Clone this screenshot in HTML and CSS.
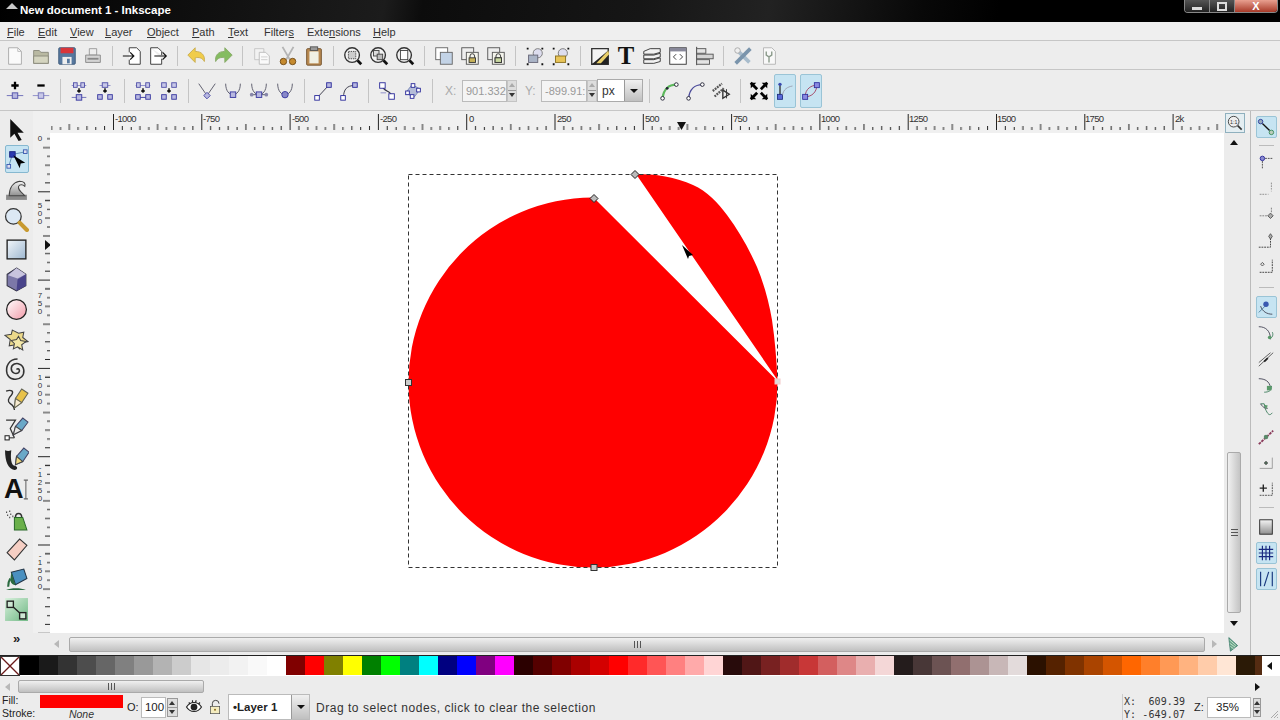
FILE: index.html
```html
<!DOCTYPE html>
<html lang="en">
<head>
    <meta charset="UTF-8">
    <title>New document 1 - Inkscape</title>
    <link rel="stylesheet" href="styles.css">
</head>
<body>
    <!-- icon set -->
    <svg class="defs" width="0" height="0">
        <defs>
            <linearGradient id="blue" x1="0" y1="0" x2="1" y2="1"><stop offset="0" stop-color="#f2f6fa"/><stop offset="1" stop-color="#9db7d0"/></linearGradient>
            <linearGradient id="pink" x1="0" y1="0" x2="1" y2="1"><stop offset="0" stop-color="#fff"/><stop offset="1" stop-color="#f29aa8"/></linearGradient>
            <linearGradient id="grey" x1="0" y1="0" x2="0" y2="1"><stop offset="0" stop-color="#f4f4f4"/><stop offset="1" stop-color="#8f8f8f"/></linearGradient>
            <linearGradient id="green" x1="0" y1="0" x2="1" y2="1"><stop offset="0" stop-color="#d8f0dc"/><stop offset="1" stop-color="#6fb884"/></linearGradient>

            <symbol id="new" viewBox="0 0 24 24"><path d="M5 3h10l4 4v14H5z" fill="#fafafa" stroke="#aaa"/><path d="M15 3v4h4" fill="none" stroke="#bbb"/></symbol>
            <symbol id="open" viewBox="0 0 24 24"><path d="M4 6h6l2 2h8v12H4z" fill="#b9b9a2" stroke="#8a8a7c"/><path d="M4 12h16v8H4z" fill="#d5d5c0" stroke="#8a8a7c"/></symbol>
            <symbol id="save" viewBox="0 0 24 24"><rect x="3" y="3" width="18" height="18" rx="1" fill="#56789f" stroke="#3e5a7a"/><rect x="5" y="3" width="14" height="6" fill="#d9353a"/><rect x="7" y="13" width="10" height="8" fill="#eee"/><rect x="12" y="15" width="3" height="5" fill="#56789f"/></symbol>
            <symbol id="print" viewBox="0 0 24 24"><path d="M8 4h8v7H8z" fill="#eee" stroke="#999"/><path d="M4 11h16v8H4z" fill="#d4d4d4" stroke="#888"/><path d="M6 15h12" stroke="#888" stroke-width="2"/></symbol>
            <symbol id="import" viewBox="0 0 24 24"><path d="M9 8V3h8l4 4v14H9v-5" fill="#fff" stroke="#333"/><path d="M2 12h12M10 8l4 4-4 4" fill="none" stroke="#111" stroke-width="1.300"/></symbol>
            <symbol id="export" viewBox="0 0 24 24"><path d="M4 3h8l4 4v4M16 15v6H4V3" fill="#fff" stroke="#333"/><path d="M8 12h13M17 8l4 4-4 4" fill="none" stroke="#111" stroke-width="1.300"/></symbol>
            <symbol id="undo" viewBox="0 0 24 24"><path d="M10 3L2 11l8 8v-5c4-1 8 0 10 4 1-7-3-11-10-11z" fill="#f0cc4a" stroke="#c8ac50"/></symbol>
            <symbol id="redo" viewBox="0 0 24 24"><path d="M14 3l8 8-8 8v-5c-4-1-8 0-10 4-1-7 3-11 10-11z" fill="#84bc60" stroke="#8aaa6a"/></symbol>
            <symbol id="dup" viewBox="0 0 24 24"><path d="M4 4h10v12H4z" fill="#f2f2f2" stroke="#c4c4c4"/><path d="M9 8h7l4 4v9H9z" fill="#fafafa" stroke="#bbb"/><path d="M11 13h7M11 16h7" stroke="#ccc"/></symbol>
            <symbol id="cut" viewBox="0 0 24 24"><path d="M6 2l8 14M18 2L10 16" stroke="#b4b4b4" stroke-width="2"/><circle cx="7" cy="18" r="3.500" fill="#c58a2e" stroke="#704a18"/><circle cx="17" cy="18" r="3.500" fill="#c58a2e" stroke="#704a18"/></symbol>
            <symbol id="paste" viewBox="0 0 24 24"><rect x="4" y="4" width="16" height="18" rx="1" fill="#b98a52" stroke="#704f28"/><rect x="7" y="7" width="10" height="13" fill="#f0f0e4"/><rect x="8" y="2" width="8" height="4" fill="#999" stroke="#555"/></symbol>
            <symbol id="lens" viewBox="0 0 24 24"><circle cx="11" cy="11" r="8" fill="#f2f2f2" stroke="#333" stroke-width="1.500"/><path d="M17 17l4 4" stroke="#111" stroke-width="3"/></symbol>
            <symbol id="zsel" viewBox="0 0 24 24"><use href="#lens"/><rect x="7" y="7" width="8" height="8" fill="#ccc" stroke="#444" stroke-dasharray="1.500 1"/></symbol>
            <symbol id="zdraw" viewBox="0 0 24 24"><use href="#lens"/><rect x="6" y="6" width="6" height="6" fill="#ddd" stroke="#444"/><rect x="10" y="10" width="6" height="6" fill="#bbb" stroke="#444"/></symbol>
            <symbol id="zpage" viewBox="0 0 24 24"><use href="#lens"/><rect x="7" y="6" width="8" height="10" fill="#fff" stroke="#444"/></symbol>
            <symbol id="group1" viewBox="0 0 24 24"><rect x="3" y="3" width="13" height="13" fill="#fff" stroke="#666"/><rect x="8" y="8" width="13" height="13" fill="#c3d3e6" stroke="#666"/></symbol>
            <symbol id="lock1" viewBox="0 0 24 24"><rect x="3" y="3" width="13" height="13" fill="#eee" stroke="#555"/><rect x="8" y="8" width="13" height="13" fill="#f4f4ec" stroke="#555"/><path d="M12 14v-2a2.500 2.500 0 015 0v2" fill="none" stroke="#333"/><rect x="11" y="14" width="7" height="5" fill="#c8b35a" stroke="#333"/></symbol>
            <symbol id="lock2" viewBox="0 0 24 24"><use href="#lock1"/><rect x="11" y="14" width="7" height="5" fill="#c8d8a0" stroke="#333"/></symbol>
            <symbol id="sel1" viewBox="0 0 24 24"><path d="M3 4h2M19 4h2M3 21h2M19 21h2" stroke="#111" stroke-width="2"/><circle cx="15" cy="9" r="5" fill="#dde" stroke="#777"/><rect x="5" y="11" width="10" height="8" fill="#aab4c6" stroke="#667"/></symbol>
            <symbol id="sel2" viewBox="0 0 24 24"><path d="M3 4h2M19 4h2M3 21h2M19 21h2" stroke="#111" stroke-width="2"/><circle cx="14" cy="9" r="5" fill="#dde" stroke="#777"/><rect x="6" y="12" width="11" height="7" fill="#e8c458" stroke="#8a7020"/></symbol>
            <symbol id="fills" viewBox="0 0 24 24"><path d="M3 4h18v17H3z" fill="#f4f4f4" stroke="#333" stroke-width="1.500"/><path d="M3 21L21 6v15z" fill="#222"/><path d="M8 20L21 6l1 4-9 10z" fill="#e9cf6a"/></symbol>
            <symbol id="textt" viewBox="0 0 24 24"><text x="12" y="21" text-anchor="middle" class="glyph-t">T</text></symbol>
            <symbol id="layers" viewBox="0 0 24 24"><path d="M3 7l7-3h11v4l-7 2H3zM3 11h11l7-2v4l-7 2H3zM3 16h11l7-2v4l-7 2H3z" fill="#f2f2f2" stroke="#333"/></symbol>
            <symbol id="xml" viewBox="0 0 24 24"><rect x="3" y="3" width="18" height="18" fill="#fff" stroke="#333"/><rect x="3" y="3" width="18" height="4" fill="#889"/><path d="M10 10l-3 3 3 3M14 10l3 3-3 3" fill="none" stroke="#333"/></symbol>
            <symbol id="align" viewBox="0 0 24 24"><path d="M4 2v20" stroke="#333"/><rect x="4" y="4" width="10" height="5" fill="#e4e4e4" stroke="#555"/><rect x="4" y="10" width="18" height="5" fill="#d4d4d4" stroke="#555"/><rect x="4" y="16" width="14" height="5" fill="#e4e4e4" stroke="#555"/></symbol>
            <symbol id="tools" viewBox="0 0 24 24"><path d="M5 5l14 14" stroke="#a8bccc" stroke-width="4"/><path d="M20 4L4 20" stroke="#7a94ac" stroke-width="4"/><circle cx="6" cy="6" r="3" fill="#efefef" stroke="#a8a8a8"/></symbol>
            <symbol id="docprops" viewBox="0 0 24 24"><path d="M6 3h9l4 4v14H6z" fill="#f8f8f8" stroke="#b4b4b4"/><path d="M9 7v4l3 2v6M15 7v4l-3 2" fill="none" stroke="#8a9a8a" stroke-width="1.500"/></symbol>

            <!-- node toolbar -->
            <symbol id="nadd" viewBox="0 0 24 24"><path d="M12 2v8M8 6h8" stroke="#000" stroke-width="2.500"/><path d="M3 17h18" stroke="#6a6ab8"/><rect x="9" y="14" width="6" height="6" fill="#b8b8e0" stroke="#5050a8"/></symbol>
            <symbol id="nsub" viewBox="0 0 24 24"><path d="M8 6h8" stroke="#000" stroke-width="2.500"/><path d="M3 17h18" stroke="#8a8ac8"/><rect x="9" y="14" width="6" height="6" fill="#c8c8e8" stroke="#7070b8"/></symbol>
            <symbol id="njoin" viewBox="0 0 24 24"><path d="M4 6h16" stroke="#8a8ac8"/><rect x="6" y="3" width="4" height="5" fill="#c8c8e8" stroke="#5050a8"/><rect x="14" y="3" width="4" height="5" fill="#c8c8e8" stroke="#5050a8"/><path d="M12 9v5M10 12h4" stroke="#000" stroke-width="1.500"/><path d="M4 19h16" stroke="#6a6ab8"/><rect x="9" y="16" width="6" height="6" fill="#b8b8e0" stroke="#3838a0"/></symbol>
            <symbol id="nbreak" viewBox="0 0 24 24"><path d="M6 6h12" stroke="#8a8ac8"/><rect x="9" y="3" width="6" height="5" fill="#c8c8e8" stroke="#5050a8"/><path d="M12 9v5M10 12h4" stroke="#000" stroke-width="1.500"/><rect x="4" y="16" width="5" height="5" fill="#b8b8e0" stroke="#3838a0"/><rect x="15" y="16" width="5" height="5" fill="#b8b8e0" stroke="#3838a0"/></symbol>
            <symbol id="nseg1" viewBox="0 0 24 24"><path d="M4 6h16" stroke="#8a8ac8"/><rect x="5" y="3" width="4" height="5" fill="#c8c8e8" stroke="#5050a8"/><rect x="15" y="3" width="4" height="5" fill="#c8c8e8" stroke="#5050a8"/><path d="M12 9v5M10 12h4" stroke="#000" stroke-width="1.500"/><path d="M4 19h16" stroke="#3838a0"/><rect x="4" y="16" width="5" height="5" fill="#b8b8e0" stroke="#3838a0"/><rect x="15" y="16" width="5" height="5" fill="#b8b8e0" stroke="#3838a0"/></symbol>
            <symbol id="nseg2" viewBox="0 0 24 24"><rect x="4" y="3" width="5" height="5" fill="#c8c8e8" stroke="#5050a8"/><rect x="15" y="3" width="5" height="5" fill="#c8c8e8" stroke="#5050a8"/><path d="M12 9v5M10 12h4" stroke="#000" stroke-width="1.500"/><rect x="4" y="16" width="5" height="5" fill="#b8b8e0" stroke="#3838a0"/><rect x="15" y="16" width="5" height="5" fill="#b8b8e0" stroke="#3838a0"/></symbol>
            <symbol id="ncusp" viewBox="0 0 24 24"><path d="M3 4l9 13M21 4l-9 13" fill="none" stroke="#556"/><rect x="9.500" y="14.500" width="5" height="5" transform="rotate(45 12 17)" fill="#b8b8e0" stroke="#5050a8"/></symbol>
            <symbol id="nsmooth" viewBox="0 0 24 24"><path d="M4 4c0 8 4 12 8 12s8-4 8-12" fill="none" stroke="#556"/><rect x="9" y="13" width="6" height="6" fill="#b8b8e0" stroke="#3838a0"/></symbol>
            <symbol id="nsym" viewBox="0 0 24 24"><path d="M4 4c0 8 4 12 8 12s8-4 8-12" fill="none" stroke="#556"/><path d="M3 16h18" stroke="#556"/><rect x="9" y="13" width="6" height="6" fill="#b8b8e0" stroke="#3838a0"/><circle cx="4" cy="16" r="2" fill="#88a"/><circle cx="20" cy="16" r="2" fill="#88a"/></symbol>
            <symbol id="nauto" viewBox="0 0 24 24"><path d="M4 4c0 8 4 12 8 12s8-4 8-12" fill="none" stroke="#556"/><circle cx="12" cy="16" r="3.500" fill="#8888c8" stroke="#3838a0"/></symbol>
            <symbol id="nline" viewBox="0 0 24 24"><path d="M6 19L18 6" stroke="#334"/><rect x="3" y="17" width="5" height="5" fill="#fff" stroke="#2a2a9a"/><rect x="16" y="3" width="5" height="5" fill="#b8b8e0" stroke="#2a2a9a"/></symbol>
            <symbol id="ncurve" viewBox="0 0 24 24"><path d="M6 19C6 10 10 6 18 6" fill="none" stroke="#334"/><rect x="3" y="17" width="5" height="5" fill="#fff" stroke="#2a2a9a"/><rect x="16" y="3" width="5" height="5" fill="#b8b8e0" stroke="#2a2a9a"/></symbol>
            <symbol id="nobj" viewBox="0 0 24 24"><path d="M7 6c0 7 10 5 10 12" fill="none" stroke="#334" stroke-width="1.500"/><rect x="4" y="3" width="6" height="6" fill="#fff" stroke="#2a2a9a"/><rect x="14" y="15" width="6" height="6" fill="#fff" stroke="#2a2a9a"/><path d="M5 14h6" stroke="#8a8ac8"/></symbol>
            <symbol id="nstroke" viewBox="0 0 24 24"><path d="M4 14l7-9 9 5-7 9z" fill="#b4bcd8" stroke="#7a88b8"/><rect x="10" y="4" width="4" height="4" fill="#fff" stroke="#2a2a9a"/><rect x="4" y="12" width="4" height="4" fill="#fff" stroke="#2a2a9a"/><rect x="16" y="9" width="4" height="4" fill="#fff" stroke="#2a2a9a"/><rect x="9" y="16" width="4" height="4" fill="#fff" stroke="#2a2a9a"/></symbol>
            <symbol id="nlpe" viewBox="0 0 24 24"><path d="M5 20C6 10 12 5 20 5" fill="none" stroke="#5cb85c" stroke-width="2.500"/><circle cx="5" cy="20" r="2" fill="#fff" stroke="#223"/><circle cx="20" cy="5" r="2" fill="#fff" stroke="#223"/><circle cx="10" cy="9" r="1.500" fill="#223"/></symbol>
            <symbol id="nclip" viewBox="0 0 24 24"><path d="M5 20C6 10 12 5 20 5" fill="none" stroke="#4a4a9a" stroke-width="1.500"/><circle cx="5" cy="20" r="2" fill="#fff" stroke="#223"/><circle cx="20" cy="5" r="2" fill="#fff" stroke="#223"/></symbol>
            <symbol id="nmask" viewBox="0 0 24 24"><path d="M3 12l10-8M5 18l10-9" stroke="#555" stroke-width="2.500" stroke-dasharray="2 1"/><path d="M14 11v9l7-4.500z" fill="none" stroke="#333" stroke-width="1.500"/><path d="M18 10v10" stroke="#333"/></symbol>
            <symbol id="nhandle" viewBox="0 0 24 24"><path d="M3 3l7 7M21 3l-7 7M3 21l7-7M21 21l-7-7" stroke="#000" stroke-width="3"/><path d="M3 3h6L3 9zM21 3h-6l6 6zM3 21h6l-6-6zM21 21h-6l6-6z" fill="#000"/></symbol>
            <symbol id="nshow" viewBox="0 0 24 24"><path d="M6 5v15" stroke="#222" stroke-width="1.500"/><circle cx="6" cy="4" r="2" fill="#3a4ab0"/><rect x="3" y="16" width="6" height="6" fill="#5a6ad8" stroke="#1a2a80"/><path d="M9 17C10 10 15 7 21 6" fill="none" stroke="#99a"/></symbol>
            <symbol id="noutline" viewBox="0 0 24 24"><path d="M5 19C5 9 13 5 19 5" fill="none" stroke="#a03050"/><path d="M5 19c8 0 14-6 14-14" fill="none" stroke="#a03050"/><rect x="2" y="16" width="6" height="6" fill="#8a8ae0" stroke="#2a2a9a"/><rect x="16" y="2" width="6" height="6" fill="#8a8ae0" stroke="#2a2a9a"/></symbol>

            <!-- left toolbox -->
            <symbol id="tselect" viewBox="0 0 24 24"><path d="M6 2l13 13h-6l4 7-3 1-4-7-4 4z" fill="#111"/></symbol>
            <symbol id="tnode" viewBox="0 0 24 24"><path d="M7 7l15-3M7 7L3 20" stroke="#5a8ab0" fill="none"/><rect x="4" y="4" width="6" height="6" fill="#2a3ab0" stroke="#1a2480"/><rect x="19" y="2" width="4" height="4" fill="#dde" stroke="#3a5ab0"/><rect x="1" y="18" width="4" height="4" fill="#dde" stroke="#3a5ab0"/><path d="M8 8l13 8-5 1-1 5z" fill="#000"/></symbol>
            <symbol id="ttweak" viewBox="0 0 24 24"><path d="M2 22v-5h20v5z" fill="#8a8a8a"/><path d="M5 18c0-8 4-13 10-14 4 0 6 2 5 5-2-2-5-2-6 0-1 3 2 5 6 9z" fill="url(#grey)" stroke="#444"/></symbol>
            <symbol id="tzoom" viewBox="0 0 24 24"><circle cx="9" cy="9" r="7.500" fill="#dce8f4" stroke="#333" stroke-width="1.200"/><path d="M15 15l7 7" stroke="#c89a30" stroke-width="4" stroke-linecap="round"/></symbol>
            <symbol id="trect" viewBox="0 0 24 24"><rect x="3" y="3" width="18" height="18" fill="url(#blue)" stroke="#222" stroke-width="1.300"/></symbol>
            <symbol id="t3d" viewBox="0 0 24 24"><path d="M12 1l9 6v11l-9 5-9-5V7z" fill="#7c78a8" stroke="#334"/><path d="M12 1l9 6-8 4-9-3z" fill="#c8c4de"/><path d="M13 12l8-5v11l-9 5z" fill="#49448a"/></symbol>
            <symbol id="tcircle" viewBox="0 0 24 24"><circle cx="12" cy="12" r="9.500" fill="url(#pink)" stroke="#222" stroke-width="1.200"/></symbol>
            <symbol id="tstar" viewBox="0 0 24 24"><path d="M8 3l6 3 5-1-1 5 5 4-6 1-2 6-4-4-6 1 1-6-5-4 6-1z" fill="#ecd98a" stroke="#444"/><path d="M14 9l2 4 5 1-4 3 1 5-5-3-4 2 1-5-3-3 5-1z" fill="#f4e8a8" stroke="#444"/></symbol>
            <symbol id="tspiral" viewBox="0 0 24 24"><path d="M12 12c2-2 4 1 2 3-3 2-7 0-7-4 0-4 5-6 8-4 5 2 5 9 2 12-4 4-12 3-14-3C1 9 5 2 13 2" fill="none" stroke="#333" stroke-width="1.500"/></symbol>
            <symbol id="tpencil" viewBox="0 0 24 24"><path d="M2 4c5-2 8 0 5 4-3 3-4 6-1 8 3 2 4 4 4 6" fill="none" stroke="#333" stroke-width="1.300"/><path d="M10 20l1-9 6-9 6 4-6 9z" fill="#e8c24a" stroke="#665"/><path d="M10 20l1-9 6 4z" fill="#f8ecd0" stroke="#665"/></symbol>
            <symbol id="tpen" viewBox="0 0 24 24"><path d="M2 3h9l-5 8 4 9" fill="none" stroke="#333" stroke-width="1.200"/><path d="M2 20h8" stroke="#333"/><rect x="1" y="18" width="4" height="4" fill="#fff" stroke="#222"/><path d="M9 17l2-8 7-8 5 4-6 8z" fill="#6aa8c8" stroke="#446"/><path d="M9 17l2-8 6 4z" fill="#e8e8e8" stroke="#444"/></symbol>
            <symbol id="tcalli" viewBox="0 0 24 24"><path d="M1 3c0 11 3 18 9 19 4 0 3-4 0-4-3-1-4-7-3-15-2 1-4 1-6 0z" fill="#222"/><path d="M11 17l1-8 7-8 5 4-6 9z" fill="#6aa8c8" stroke="#446"/><path d="M11 17l1-8 6 5z" fill="#f0d880" stroke="#444"/></symbol>
            <symbol id="ttext" viewBox="0 0 24 24"><text x="0" y="20" class="glyph-a">A</text><path d="M19 3h4M21 3v18M19 21h4" stroke="#666" fill="none"/></symbol>
            <symbol id="tspray" viewBox="0 0 24 24"><path d="M11 10c0-5 6-5 6 0" fill="none" stroke="#333" stroke-width="1.500"/><path d="M10 10h8l4 12-12 0z" fill="#6ab04a" stroke="#2a6a2a"/><path d="M2 5h1M5 4h1M3 8h1M6 7h1M5 10h1M8 9h1" stroke="#444" stroke-width="1.500"/></symbol>
            <symbol id="teraser" viewBox="0 0 24 24"><path d="M3 15L15 2l7 6-12 14z" fill="#f6cfc4" stroke="#333"/></symbol>
            <symbol id="tfill" viewBox="0 0 24 24"><path d="M7 5l12-3 3 9-11 6z" fill="#4a90c0" stroke="#234"/><path d="M7 5l4 12c-2 1-4-1-5-4z" fill="#2a6a40"/><path d="M6 11c-2 3-2 5-2 8" stroke="#2a6a40" stroke-width="2" fill="none"/><path d="M2 22c5-2 14-2 19 0z" fill="#2a6a40"/></symbol>
            <symbol id="tconn" viewBox="0 0 24 24"><rect x="1" y="1" width="22" height="22" fill="url(#green)"/><path d="M6 7l12 11" stroke="#222" stroke-width="1.300"/><rect x="3" y="4" width="6" height="6" fill="#cfe8d4" stroke="#222" stroke-width="1.300"/><rect x="15" y="15" width="6" height="6" fill="#cfe8d4" stroke="#222" stroke-width="1.300"/></symbol>

            <!-- snap bar -->
            <symbol id="s1" viewBox="0 0 20 20"><path d="M6 6l8 8" stroke="#111" stroke-width="1.500"/><circle cx="4" cy="4" r="2.500" fill="#9ab" stroke="#2a3a9a"/><circle cx="16" cy="16" r="2.500" fill="#bcb" stroke="#3a8a5a"/></symbol>
            <symbol id="s2" viewBox="0 0 20 20"><path d="M6 6h12M6 6v12" stroke="#444" stroke-dasharray="2 1"/><circle cx="6" cy="6" r="2.500" fill="#8a8ad0" stroke="#2a2a9a"/></symbol>
            <symbol id="s3" viewBox="0 0 20 20"><path d="M3 17h7M16 4v7" stroke="#888" stroke-dasharray="2 1"/><path d="M10 17h3M16 11v3" stroke="#aaa" stroke-dasharray="1 1"/></symbol>
            <symbol id="s4" viewBox="0 0 20 20"><path d="M3 12h10M16 3v6" stroke="#777" stroke-dasharray="2 1"/><path d="M15 9l3 3-3 3-3-3z" fill="#aaa" stroke="#555"/></symbol>
            <symbol id="s5" viewBox="0 0 20 20"><path d="M2 18h13v-10" fill="none" stroke="#333" stroke-dasharray="2 1"/><path d="M15 3l2 3-2 3-2-3z" fill="#aaa" stroke="#555"/></symbol>
            <symbol id="s6" viewBox="0 0 20 20"><path d="M3 17h14V3" fill="none" stroke="#333" stroke-dasharray="2 1"/><path d="M6 6l2 2-2 2-2-2z" fill="#ddd" stroke="#555"/></symbol>
            <symbol id="s7" viewBox="0 0 20 20"><path d="M4 9c2 6 7 9 13 9" fill="none" stroke="#445"/><path d="M2 16l9-9" stroke="#4a7a9a"/><circle cx="10" cy="7" r="3" fill="#3a5ab0"/></symbol>
            <symbol id="s8" viewBox="0 0 20 20"><path d="M2 3c8 0 13 5 13 14" fill="none" stroke="#445"/><path d="M15 16c3-2 3-5 2-7" fill="none" stroke="#3a7a5a"/><circle cx="14" cy="15" r="2" fill="#5a9a6a"/></symbol>
            <symbol id="s9" viewBox="0 0 20 20"><path d="M2 18L18 3M2 14L15 3" stroke="#555"/><path d="M8 13l4-4" stroke="#222" stroke-width="2"/></symbol>
            <symbol id="s10" viewBox="0 0 20 20"><path d="M2 3c7 0 12 3 13 10" fill="none" stroke="#445"/><path d="M8 18c5 0 9-2 8-7" fill="none" stroke="#3a7a5a"/><rect x="11" y="11" width="5" height="5" fill="#5a9a6a"/></symbol>
            <symbol id="s11" viewBox="0 0 20 20"><path d="M4 2h4l1 5c3 7 5 9 8 5" fill="none" stroke="#3a7a5a"/><path d="M4 2c3 5 6 5 8 5" fill="none" stroke="#445"/><path d="M8 3l4 1-2 4z" fill="#5a9a6a"/></symbol>
            <symbol id="s12" viewBox="0 0 20 20"><path d="M2 18L18 3" stroke="#8a3a5a" stroke-width="2" stroke-dasharray="3 1"/><circle cx="10" cy="10" r="2.500" fill="#5a8a6a"/></symbol>
            <symbol id="s13" viewBox="0 0 20 20"><path d="M3 16h14V4" fill="none" stroke="#999"/><circle cx="10" cy="10" r="1.500" fill="#5a8a6a" stroke="#444"/></symbol>
            <symbol id="s14" viewBox="0 0 20 20"><path d="M3 9h8M7 5v8" stroke="#222" stroke-width="1.500"/><path d="M3 17h14V3" fill="none" stroke="#444" stroke-dasharray="2 1"/></symbol>
            <symbol id="s15" viewBox="0 0 20 20"><rect x="3" y="2" width="14" height="16" fill="url(#grey)" stroke="#222"/></symbol>
            <symbol id="s16" viewBox="0 0 20 20"><path d="M2 6h16M2 10h16M2 14h16M6 2v16M10 2v16M14 2v16" stroke="#1a2a80" stroke-width="1.300"/></symbol>
            <symbol id="s17" viewBox="0 0 20 20"><path d="M4 2v16M17 2v16M8 18L13 2" stroke="#1a3a80" stroke-width="1.300"/></symbol>
        </defs>
    </svg>

    <div class="window">
        <!-- title bar -->
        <div class="title-bar">
            <span class="app-mark"></span>
            <span class="title-text">New document 1 - Inkscape</span>
            <div class="win-buttons">
                <span class="win-btn"><i class="win-min"></i></span>
                <span class="win-btn"><i class="win-max"></i></span>
                <span class="win-btn win-close">X</span>
            </div>
        </div>

        <!-- menu -->
        <div class="menu-bar">
            <span class="m-file"><u>F</u>ile</span>
            <span class="m-edit"><u>E</u>dit</span>
            <span class="m-view"><u>V</u>iew</span>
            <span class="m-layer"><u>L</u>ayer</span>
            <span class="m-object"><u>O</u>bject</span>
            <span class="m-path"><u>P</u>ath</span>
            <span class="m-text"><u>T</u>ext</span>
            <span class="m-filters">Filter<u>s</u></span>
            <span class="m-ext">Exte<u>n</u>sions</span>
            <span class="m-help"><u>H</u>elp</span>
        </div>

        <!-- commands toolbar -->
        <div class="toolbar tool-main">
            <span class="btn"><svg><use href="#new"/></svg></span>
            <span class="btn"><svg><use href="#open"/></svg></span>
            <span class="btn"><svg><use href="#save"/></svg></span>
            <span class="btn"><svg><use href="#print"/></svg></span>
            <span class="sep"></span>
            <span class="btn"><svg><use href="#import"/></svg></span>
            <span class="btn"><svg><use href="#export"/></svg></span>
            <span class="sep"></span>
            <span class="btn"><svg><use href="#undo"/></svg></span>
            <span class="btn"><svg><use href="#redo"/></svg></span>
            <span class="sep"></span>
            <span class="btn"><svg><use href="#dup"/></svg></span>
            <span class="btn"><svg><use href="#cut"/></svg></span>
            <span class="btn"><svg><use href="#paste"/></svg></span>
            <span class="sep"></span>
            <span class="btn"><svg><use href="#zsel"/></svg></span>
            <span class="btn"><svg><use href="#zdraw"/></svg></span>
            <span class="btn"><svg><use href="#zpage"/></svg></span>
            <span class="sep"></span>
            <span class="btn"><svg><use href="#group1"/></svg></span>
            <span class="btn"><svg><use href="#lock1"/></svg></span>
            <span class="btn"><svg><use href="#lock2"/></svg></span>
            <span class="sep"></span>
            <span class="btn"><svg><use href="#sel1"/></svg></span>
            <span class="btn"><svg><use href="#sel2"/></svg></span>
            <span class="sep"></span>
            <span class="btn"><svg><use href="#fills"/></svg></span>
            <span class="btn"><svg><use href="#textt"/></svg></span>
            <span class="btn"><svg><use href="#layers"/></svg></span>
            <span class="btn"><svg><use href="#xml"/></svg></span>
            <span class="btn"><svg><use href="#align"/></svg></span>
            <span class="sep"></span>
            <span class="btn"><svg><use href="#tools"/></svg></span>
            <span class="btn"><svg><use href="#docprops"/></svg></span>
        </div>

        <!-- node tool controls -->
        <div class="toolbar tool-node">
            <span class="btn"><svg><use href="#nadd"/></svg></span>
            <span class="btn"><svg><use href="#nsub"/></svg></span>
            <span class="sep"></span>
            <span class="btn"><svg><use href="#njoin"/></svg></span>
            <span class="btn"><svg><use href="#nbreak"/></svg></span>
            <span class="sep"></span>
            <span class="btn"><svg><use href="#nseg1"/></svg></span>
            <span class="btn"><svg><use href="#nseg2"/></svg></span>
            <span class="sep"></span>
            <span class="btn"><svg><use href="#ncusp"/></svg></span>
            <span class="btn"><svg><use href="#nsmooth"/></svg></span>
            <span class="btn"><svg><use href="#nsym"/></svg></span>
            <span class="btn"><svg><use href="#nauto"/></svg></span>
            <span class="sep"></span>
            <span class="btn"><svg><use href="#nline"/></svg></span>
            <span class="btn"><svg><use href="#ncurve"/></svg></span>
            <span class="sep"></span>
            <span class="btn"><svg><use href="#nobj"/></svg></span>
            <span class="btn"><svg><use href="#nstroke"/></svg></span>
            <span class="sep"></span>
            <span class="coord-label coord-x">X:</span>
            <span class="coord-input coord-input-x">901.332</span>
            <span class="spin spin-off"><i></i><i></i></span>
            <span class="coord-label coord-y">Y:</span>
            <span class="coord-input coord-input-y">-899.91:</span>
            <span class="spin spin-off"><i></i><i></i></span>
            <span class="unit-combo"><span>px</span><b></b></span>
            <span class="sep sep-unit"></span>
            <span class="btn"><svg><use href="#nlpe"/></svg></span>
            <span class="btn"><svg><use href="#nclip"/></svg></span>
            <span class="btn"><svg><use href="#nmask"/></svg></span>
            <span class="sep"></span>
            <span class="btn"><svg><use href="#nhandle"/></svg></span>
            <span class="btn btn-on"><svg><use href="#nshow"/></svg></span>
            <span class="btn btn-on"><svg><use href="#noutline"/></svg></span>
        </div>

        <!-- main area -->
        <div class="workspace">
            <div class="toolbox">
                <span class="tool"><svg><use href="#tselect"/></svg></span>
                <span class="tool tool-on"><svg><use href="#tnode"/></svg></span>
                <span class="tool"><svg><use href="#ttweak"/></svg></span>
                <span class="tool"><svg><use href="#tzoom"/></svg></span>
                <span class="tool"><svg><use href="#trect"/></svg></span>
                <span class="tool"><svg><use href="#t3d"/></svg></span>
                <span class="tool"><svg><use href="#tcircle"/></svg></span>
                <span class="tool"><svg><use href="#tstar"/></svg></span>
                <span class="tool"><svg><use href="#tspiral"/></svg></span>
                <span class="tool"><svg><use href="#tpencil"/></svg></span>
                <span class="tool"><svg><use href="#tpen"/></svg></span>
                <span class="tool"><svg><use href="#tcalli"/></svg></span>
                <span class="tool"><svg><use href="#ttext"/></svg></span>
                <span class="tool"><svg><use href="#tspray"/></svg></span>
                <span class="tool"><svg><use href="#teraser"/></svg></span>
                <span class="tool"><svg><use href="#tfill"/></svg></span>
                <span class="tool"><svg><use href="#tconn"/></svg></span>
                <span class="tool-more">»</span>
            </div>

            <div class="center">
                <div class="top-row">
                    <svg class="h-ruler" width="1191" height="22" viewBox="33 111 1191 22">
                        <defs>
                            <pattern id="hticks" patternUnits="userSpaceOnUse" x="113" y="111" width="88.3" height="22">
                                <path d="M.5 3v16M9.300 15v4M18.200 16v3M26.900 15v4M35.800 16v3M44.600 13v6M53.400 16v3M62.300 15v4M71.100 16v3M79.900 15v4" stroke="#222" fill="none"/>
                            </pattern>
                        </defs>
                        <rect x="51" y="111" width="1173" height="22" fill="url(#hticks)"/>
                        <g class="ruler-label">
                            <text x="115" y="122">-1000</text><text x="203" y="122">-750</text><text x="292" y="122">-500</text><text x="380" y="122">-250</text>
                            <text x="469" y="122">0</text><text x="557" y="122">250</text><text x="645" y="122">500</text><text x="733" y="122">750</text>
                            <text x="821" y="122">1000</text><text x="909" y="122">1250</text><text x="997" y="122">1500</text><text x="1085" y="122">1750</text><text x="1175" y="122">2k</text>
                        </g>
                        <path d="M677 122h9l-4.500 8z" fill="#111"/>
                    </svg>
                    <span class="zoom-one"><svg viewBox="0 0 24 24"><circle cx="10" cy="10" r="8" fill="#eee" stroke="#333" stroke-width="1.300"/><path d="M16 16l6 6" stroke="#333" stroke-width="2.500"/><text x="10" y="13" text-anchor="middle" class="glyph-one">1:1</text></svg></span>
                </div>

                <div class="mid-row">
                    <svg class="v-ruler" width="17" height="500" viewBox="33 133 17 500">
                        <defs>
                            <pattern id="vticks" patternUnits="userSpaceOnUse" x="33" y="103" width="17" height="88.3">
                                <path d="M5 .5h12M12 9.300h5M14 18.200h3M12 26.900h5M14 35.800h3M10 44.600h7M14 53.400h3M12 62.300h5M14 71.100h3M12 79.900h5" stroke="#222" fill="none"/>
                            </pattern>
                        </defs>
                        <rect x="33" y="133" width="17" height="500" fill="url(#vticks)"/>
                        <g class="ruler-label v-label" text-anchor="middle">
                            <text x="40" y="141">0</text>
                            <text y="208"><tspan x="40">5</tspan><tspan x="40" dy="8">0</tspan><tspan x="40" dy="8">0</tspan></text>
                            <text y="298"><tspan x="40">7</tspan><tspan x="40" dy="8">5</tspan><tspan x="40" dy="8">0</tspan></text>
                            <text y="380"><tspan x="40">1</tspan><tspan x="40" dy="8">0</tspan><tspan x="40" dy="8">0</tspan><tspan x="40" dy="8">0</tspan></text>
                            <text y="470"><tspan x="40">-</tspan><tspan x="40" dy="7">1</tspan><tspan x="40" dy="8">2</tspan><tspan x="40" dy="8">5</tspan><tspan x="40" dy="8">0</tspan></text>
                            <text y="558"><tspan x="40">-</tspan><tspan x="40" dy="7">1</tspan><tspan x="40" dy="8">5</tspan><tspan x="40" dy="8">0</tspan><tspan x="40" dy="8">0</tspan></text>
                        </g>
                        <path d="M45 240l6 5-6 5z" fill="#111"/>
                    </svg>

                    <div class="canvas">
                        <svg class="drawing" viewBox="50 133 1174 500">
                            <path d="M594 198L777.500 381A184.500 185 0 1 1 592 197.500Z" fill="#ff0000"/>
                            <path d="M636 174C655 174 676 177 693 185C707 191 718 203 727 215C739 231 749 249 757 267C764 284 769 302 772 320C775 340 776.500 360 777.500 380Z" fill="#ff0000"/>
                            <rect x="408.500" y="174.500" width="369" height="393" fill="none" stroke="#333" stroke-dasharray="4 3"/>
                            <path d="M635 170.500l4 4-4 4-4-4z" fill="#bbb" stroke="#222"/>
                            <path d="M594 194.500l4 4-4 4-4-4z" fill="#bbb" stroke="#222"/>
                            <rect x="405.500" y="379.500" width="6" height="6" fill="#ccc" stroke="#333"/>
                            <rect x="591" y="564.500" width="6" height="6" fill="#ccc" stroke="#333"/>
                            <rect x="775" y="379" width="5" height="5" fill="#ddd" stroke="#f2c8c8"/>
                            <path d="M682 245l11 10-4 1-1 3z" fill="#000"/>
                        </svg>
                    </div>

                    <div class="v-scroll">
                        <span class="arrow-up"></span>
                        <span class="v-track"><span class="v-thumb"><i></i></span></span>
                        <span class="arrow-down"></span>
                    </div>
                </div>

                <div class="bottom-row">
                    <span class="arrow-left"></span>
                    <span class="h-thumb"><i></i></span>
                    <span class="arrow-right"></span>
                    <svg class="cms" viewBox="0 0 20 20"><path d="M6 2l11 10-9 7z" fill="#6aa58a" stroke="#3a7a6a"/><path d="M7 5l8 7M7 9l7 5M8 13l4 3" stroke="#d8ecd8"/></svg>
                </div>
            </div>

            <div class="snap-bar">
                <span class="snap snap-on"><svg><use href="#s1"/></svg></span>
                <span class="snap-sep snap-sep-a"></span>
                <span class="snap"><svg><use href="#s2"/></svg></span>
                <span class="snap"><svg><use href="#s3"/></svg></span>
                <span class="snap"><svg><use href="#s4"/></svg></span>
                <span class="snap"><svg><use href="#s5"/></svg></span>
                <span class="snap"><svg><use href="#s6"/></svg></span>
                <span class="snap-sep snap-sep-b"></span>
                <span class="snap snap-on"><svg><use href="#s7"/></svg></span>
                <span class="snap"><svg><use href="#s8"/></svg></span>
                <span class="snap"><svg><use href="#s9"/></svg></span>
                <span class="snap"><svg><use href="#s10"/></svg></span>
                <span class="snap"><svg><use href="#s11"/></svg></span>
                <span class="snap"><svg><use href="#s12"/></svg></span>
                <span class="snap"><svg><use href="#s13"/></svg></span>
                <span class="snap"><svg><use href="#s14"/></svg></span>
                <span class="snap-sep snap-sep-c"></span>
                <span class="snap"><svg><use href="#s15"/></svg></span>
                <span class="snap snap-on"><svg><use href="#s16"/></svg></span>
                <span class="snap snap-on"><svg><use href="#s17"/></svg></span>
            </div>
        </div>

        <!-- colour palette -->
        <div class="palette">
            <span class="no-paint"><svg viewBox="0 0 20 20" preserveAspectRatio="none"><path d="M0 0l20 20M20 0L0 20" stroke="#6b1a1a" stroke-width="1.500"/></svg></span>
            <span class="sw sw-000000"></span><span class="sw sw-1a1a1a"></span><span class="sw sw-333333"></span><span class="sw sw-4d4d4d"></span><span class="sw sw-666666"></span><span class="sw sw-808080"></span><span class="sw sw-999999"></span><span class="sw sw-b3b3b3"></span><span class="sw sw-cccccc"></span><span class="sw sw-e6e6e6"></span><span class="sw sw-ececec"></span><span class="sw sw-f2f2f2"></span><span class="sw sw-f9f9f9"></span><span class="sw sw-ffffff"></span>
            <span class="sw sw-800000"></span><span class="sw sw-ff0000"></span><span class="sw sw-808000"></span><span class="sw sw-ffff00"></span><span class="sw sw-008000"></span><span class="sw sw-00ff00"></span><span class="sw sw-008080"></span><span class="sw sw-00ffff"></span><span class="sw sw-000080"></span><span class="sw sw-0000ff"></span><span class="sw sw-800080"></span><span class="sw sw-ff00ff"></span>
            <span class="sw sw-2b0000"></span><span class="sw sw-550000"></span><span class="sw sw-800000"></span><span class="sw sw-aa0000"></span><span class="sw sw-d40000"></span><span class="sw sw-ff0000"></span><span class="sw sw-ff2a2a"></span><span class="sw sw-ff5555"></span><span class="sw sw-ff8080"></span><span class="sw sw-ffaaaa"></span><span class="sw sw-ffd5d5"></span>
            <span class="sw sw-280b0b"></span><span class="sw sw-501616"></span><span class="sw sw-782121"></span><span class="sw sw-a02c2c"></span><span class="sw sw-c83737"></span><span class="sw sw-d35f5f"></span><span class="sw sw-de8787"></span><span class="sw sw-e9afaf"></span><span class="sw sw-f4d7d7"></span>
            <span class="sw sw-241c1c"></span><span class="sw sw-483737"></span><span class="sw sw-6c5353"></span><span class="sw sw-916f6f"></span><span class="sw sw-ac9393"></span><span class="sw sw-c8b7b7"></span><span class="sw sw-e3dbdb"></span>
            <span class="sw sw-2b1100"></span><span class="sw sw-552200"></span><span class="sw sw-803300"></span><span class="sw sw-aa4400"></span><span class="sw sw-d45500"></span><span class="sw sw-ff6600"></span><span class="sw sw-ff7f2a"></span><span class="sw sw-ff9955"></span><span class="sw sw-ffb380"></span><span class="sw sw-ffccaa"></span><span class="sw sw-ffe6d5"></span>
            <span class="sw sw-2b1a06"></span><span class="sw sw-sliver sw-552c12"></span>
            <span class="palette-arrow"></span>
        </div>

        <div class="palette-scroll">
            <span class="arrow-left arrow-faint"></span>
            <span class="p-thumb"><i></i></span>
            <span class="arrow-right arrow-dark"></span>
        </div>

        <!-- status bar -->
        <div class="status-bar">
            <div class="fill-labels">
                <span>Fill:</span>
                <span>Stroke:</span>
            </div>
            <div class="fill-values">
                <span class="fill-swatch"></span>
                <span class="stroke-none">None</span>
            </div>
            <span class="opacity-label">O:</span>
            <span class="opacity-input">100</span>
            <span class="spin"><i></i><i></i></span>
            <svg class="eye" viewBox="0 0 24 24"><path d="M2 12c5-8 15-8 20 0-5 8-15 8-20 0z" fill="#fff" stroke="#222" stroke-width="1.500"/><circle cx="12" cy="12" r="4.500" fill="#222"/><path d="M5 6l2 2M10 3v3M15 3l-1 3M20 6l-2 2" stroke="#222" stroke-width="1.500"/></svg>
            <svg class="padlock" viewBox="0 0 24 24"><path d="M8 11V7a5 5 0 0110 0" fill="none" stroke="#444" stroke-width="1.500"/><rect x="5" y="11" width="14" height="11" fill="#f4ecc0" stroke="#444"/><circle cx="12" cy="16" r="1.500" fill="#8a6a1a"/></svg>
            <span class="layer-combo"><span class="layer-name">•Layer 1</span><b></b></span>
            <span class="status-text">Drag to select nodes, click to clear the selection</span>
            <div class="coords">
                <span>X:&nbsp;&nbsp;609.39</span>
                <span>Y:&nbsp;-649.07</span>
            </div>
            <span class="zoom-label">Z:</span>
            <span class="zoom-input">35%</span>
            <span class="spin spin-zoom"><i></i><i></i></span>
            <svg class="grip" viewBox="0 0 10 10"><path d="M9 2L2 9M9 5L5 9M9 8L8 9" stroke="#aaa"/></svg>
        </div>
    </div>
</body>
</html>
```

FILE: styles.css
```css
/* page base */
* {
    box-sizing: border-box;
}
html, body {
    margin: 0;
    height: 100%;
    overflow: hidden;
}
body {
    font-family: "Liberation Sans", Arial, sans-serif;
    font-size: 12px;
    color: #222;
    background-color: #ececec;
}
.defs {
    position: absolute;
}
.window {
    width: 1280px;
    height: 720px;
    display: flex;
    flex-direction: column;
}
.glyph-t { font-family: "Liberation Serif", serif; font-weight: bold; font-size: 27px; fill: #111; }
.glyph-a { font-family: "Liberation Sans", sans-serif; font-weight: bold; font-size: 26px; fill: #111; }
.glyph-one { font-family: "Liberation Sans", sans-serif; font-size: 8px; fill: #333; }

/* title bar */
.title-bar {
    height: 22px;
    display: flex;
    align-items: center;
    padding-left: 20px;
    padding-bottom: 2px;
    background: linear-gradient(100deg, #000 0, #0c0c0c 12%, #1c1c1c 30%, #0c0c0c 33%, #161616 50%, #222 60%, #080808 72%, #000 78%);
    color: #fff;
    position: relative;
}
.app-mark {
    position: absolute;
    left: 6px;
    top: 3px;
    width: 0;
    height: 0;
    border-left: 6px solid transparent;
    border-right: 6px solid transparent;
    border-bottom: 6px solid #c8c8c8;
}
.title-text {
    font-size: 11.5px;
    font-weight: bold;
}
.win-buttons {
    margin-left: auto;
    margin-right: 2px;
    display: flex;
    height: 13px;
    align-self: flex-start;
    border: 1px solid #888;
    border-top: none;
    border-radius: 0 0 4px 4px;
    overflow: hidden;
}
.win-btn {
    width: 25px;
    display: flex;
    align-items: center;
    justify-content: center;
    background: linear-gradient(#555, #222);
    border-right: 1px solid #888;
}
.win-close {
    width: 42px;
    border-right: none;
    background: linear-gradient(#e8a090, #a83a28);
    color: #fff;
    font-weight: bold;
    font-size: 11px;
    line-height: 10px;
}
.win-min {
    width: 10px;
    height: 3px;
    margin-top: 5px;
    background-color: #ddd;
}
.win-max {
    width: 10px;
    height: 9px;
    border: 2px solid #ddd;
}

/* menu */
.menu-bar {
    height: 19px;
    display: flex;
    align-items: center;
    padding-top: 1px;
    font-size: 11px;
    color: #333;
    border-bottom: 1px solid #c6c6c6;
    background-color: #efefef;
}
.menu-bar span {
    flex: none;
}
.menu-bar .m-file { width: 31px; margin-left: 7px; }
.menu-bar .m-edit { width: 32px; }
.menu-bar .m-view { width: 35px; }
.menu-bar .m-layer { width: 42px; }
.menu-bar .m-object { width: 45px; }
.menu-bar .m-path { width: 36px; }
.menu-bar .m-text { width: 36px; }
.menu-bar .m-filters { width: 43px; }
.menu-bar .m-ext { width: 66px; }

/* toolbars */
.toolbar {
    display: flex;
    align-items: center;
    padding-left: 2px;
    padding-top: 1px;
    background-color: #ededed;
    border-bottom: 1px solid #c6c6c6;
}
.tool-main {
    height: 29px;
}
.tool-node {
    height: 41px;
}
.btn {
    flex: none;
    width: 26px;
    height: 26px;
    display: flex;
    align-items: center;
    justify-content: center;
}
.btn svg {
    width: 22px;
    height: 22px;
}
.btn-on {
    height: 34px;
    width: 22px;
    margin: 0 2px;
    background-color: #c6e4f2;
    border: 1px solid #9ac4d6;
    border-radius: 2px;
}
.sep {
    flex: none;
    width: 13px;
    height: 20px;
    background: linear-gradient(#c4c4c4, #c4c4c4) center / 1px 100% no-repeat;
}
.tool-node .sep {
    width: 12px;
    height: 24px;
}
.tool-node .sep-unit {
    width: 13px;
}

/* node coordinate fields */
.coord-label {
    flex: none;
    color: #aaa;
    font-size: 12px;
}
.coord-x {
    width: 17px;
    margin-left: 7px;
}
.coord-y {
    width: 24px;
    padding-left: 8px;
}
.coord-input {
    flex: none;
    height: 22px;
    line-height: 20px;
    padding-left: 3px;
    font-size: 11px;
    color: #999;
    background-color: #f4f4f4;
    border: 1px solid #bbb;
    white-space: nowrap;
}
.coord-input-x {
    width: 45px;
}
.coord-input-y {
    width: 46px;
}
.spin {
    flex: none;
    width: 10px;
    height: 22px;
    display: flex;
    flex-direction: column;
    border: 1px solid #999;
    background-color: #ddd;
}
.spin i {
    flex: 1;
    position: relative;
}
.spin i:first-child {
    border-bottom: 1px solid #999;
}
.spin i::after {
    content: "";
    position: absolute;
    left: 1px;
    top: 2px;
    border-left: 3px solid transparent;
    border-right: 3px solid transparent;
    border-bottom: 4px solid #333;
}
.spin i:last-child::after {
    border-bottom: none;
    border-top: 4px solid #333;
}
.spin-off {
    border-color: #c4c4c4;
}
.spin-off i::after {
    border-bottom-color: #aaa;
    border-top-color: #aaa;
}
.unit-combo {
    flex: none;
    width: 46px;
    height: 23px;
    display: flex;
    align-items: center;
    justify-content: space-between;
    padding-left: 4px;
    background-color: #fff;
    border: 1px solid #aaa;
    font-size: 12px;
    color: #333;
}
.unit-combo b,
.layer-combo b {
    width: 18px;
    height: 100%;
    display: flex;
    align-items: center;
    justify-content: center;
    background: linear-gradient(#f0f0f0, #c0c0c0);
    border-left: 1px solid #999;
}
.unit-combo b::after,
.layer-combo b::after {
    content: "";
    border-left: 4px solid transparent;
    border-right: 4px solid transparent;
    border-top: 4px solid #111;
}

/* workspace */
.workspace {
    height: 544px;
    display: flex;
}
.toolbox {
    flex: none;
    width: 33px;
    padding-top: 3px;
    display: flex;
    flex-direction: column;
    align-items: center;
    background-color: #ececec;
}
.tool {
    flex: none;
    width: 24px;
    height: 30px;
    display: flex;
    align-items: center;
    justify-content: center;
}
.tool svg {
    flex: none;
    width: 25px;
    height: 25px;
}
.tool-on {
    height: 28px;
    margin-top: 1px;
    margin-bottom: 1px;
    background-color: #c6e4f2;
    border: 1px solid #86b8d0;
    border-radius: 2px;
}
.tool-on svg {
    width: 22px;
    height: 22px;
}
.tool-more {
    margin-top: 7px;
    font-size: 13px;
    font-weight: bold;
    color: #222;
    line-height: 16px;
}

.center {
    flex: none;
    width: 1217px;
    display: flex;
    flex-direction: column;
}
.top-row {
    height: 22px;
    display: flex;
    background-color: #f0f0f0;
}
.h-ruler,
.v-ruler {
    flex: none;
    display: block;
    background-color: #f0f0f0;
}
.ruler-label {
    font-family: "Liberation Sans", sans-serif;
    font-size: 9.5px;
    letter-spacing: -.7px;
    fill: #333;
}
.v-label {
    font-size: 8px;
    letter-spacing: 0;
}
.zoom-one {
    flex: none;
    width: 20px;
    height: 20px;
    margin: 2px 0 0 1px;
    padding: 1px;
    background-color: #e4eef2;
    border: 1px solid #8fb0be;
}
.zoom-one svg {
    display: block;
    width: 100%;
    height: 100%;
}
.mid-row {
    height: 500px;
    display: flex;
}
.canvas {
    flex: none;
    width: 1174px;
    height: 500px;
    position: relative;
    background-color: #fff;
}
.drawing {
    position: absolute;
    left: 0;
    top: 0;
    width: 100%;
    height: 100%;
}

/* scrollbars */
.v-scroll {
    flex: none;
    width: 26px;
    display: flex;
    flex-direction: column;
    align-items: center;
    padding-right: 6px;
    background-color: #ececec;
}
.arrow-up {
    flex: none;
    margin-top: 7px;
    border-left: 4px solid transparent;
    border-right: 4px solid transparent;
    border-bottom: 5px solid #111;
}
.arrow-down {
    flex: none;
    margin: 8px 0 7px;
    border-left: 4px solid transparent;
    border-right: 4px solid transparent;
    border-top: 5px solid #111;
}
.v-track {
    flex: 1;
    width: 14px;
    display: flex;
    flex-direction: column;
    justify-content: flex-end;
}
.v-thumb {
    height: 161px;
    display: flex;
    align-items: center;
    justify-content: center;
    background: linear-gradient(90deg, #f0f0f0, #c4c4c4);
    border: 1px solid #aaa;
    border-radius: 2px;
}
.v-thumb i {
    width: 7px;
    height: 7px;
    border-top: 1px solid #555;
    border-bottom: 1px solid #555;
    background: linear-gradient(#555, #555) center / 100% 1px no-repeat;
}
.bottom-row {
    height: 22px;
    display: flex;
    align-items: center;
    background-color: #ececec;
}
.arrow-left {
    flex: none;
    margin-left: 21px;
    border-top: 4px solid transparent;
    border-bottom: 4px solid transparent;
    border-right: 5px solid #b8b8b8;
}
.arrow-right {
    flex: none;
    margin-left: 7px;
    border-top: 4px solid transparent;
    border-bottom: 4px solid transparent;
    border-left: 5px solid #b8b8b8;
}
.h-thumb {
    flex: none;
    width: 1136px;
    height: 15px;
    margin-left: 10px;
    display: flex;
    align-items: center;
    justify-content: center;
    background: linear-gradient(#f0f0f0, #c0c0c0);
    border: 1px solid #aaa;
    border-radius: 2px;
}
.h-thumb i,
.p-thumb i {
    width: 7px;
    height: 7px;
    border-left: 1px solid #555;
    border-right: 1px solid #555;
    background: linear-gradient(#555, #555) center / 1px 100% no-repeat;
}
.cms {
    flex: none;
    width: 16px;
    height: 16px;
    margin-left: 7px;
}

/* snap bar */
.snap-bar {
    flex: none;
    width: 30px;
    display: flex;
    flex-direction: column;
    align-items: center;
    padding-top: 5px;
    padding-left: 1px;
    background-color: #ececec;
    border-left: 1px solid #bbb;
}
.snap {
    flex: none;
    width: 21px;
    height: 22px;
    margin-bottom: 4px;
    display: flex;
    align-items: center;
    justify-content: center;
}
.snap svg {
    width: 18px;
    height: 18px;
}
.snap-on {
    background-color: #c6e4f2;
    border: 1px solid #9ac4d6;
    border-radius: 2px;
}
.snap-sep {
    flex: none;
    width: 15px;
    height: 1px;
    background-color: #bbb;
}
.snap-sep-a {
    margin: 3px 0 5px;
}
.snap-sep-b {
    margin: 6px 0 8px;
}
.snap-sep-c {
    margin: 3px 0 8px;
}

/* palette */
.palette {
    height: 21px;
    display: flex;
    background-color: #fff;
    border-top: 1px solid #222;
    position: relative;
}
.no-paint {
    flex: none;
    width: 20px;
    background-color: #fff;
    border: 1px solid #333;
}
.no-paint svg {
    display: block;
    width: 100%;
    height: 100%;
}
.sw {
    flex: none;
    width: 19px;
    margin-bottom: 1px;
}
.sw-sliver {
    width: 7px;
}
.sw-000000 { background-color: #000000; }
.sw-1a1a1a { background-color: #1a1a1a; }
.sw-333333 { background-color: #333333; }
.sw-4d4d4d { background-color: #4d4d4d; }
.sw-666666 { background-color: #666666; }
.sw-808080 { background-color: #808080; }
.sw-999999 { background-color: #999999; }
.sw-b3b3b3 { background-color: #b3b3b3; }
.sw-cccccc { background-color: #cccccc; }
.sw-e6e6e6 { background-color: #e6e6e6; }
.sw-ececec { background-color: #ececec; }
.sw-f2f2f2 { background-color: #f2f2f2; }
.sw-f9f9f9 { background-color: #f9f9f9; }
.sw-ffffff { background-color: #ffffff; }
.sw-800000 { background-color: #800000; }
.sw-ff0000 { background-color: #ff0000; }
.sw-808000 { background-color: #808000; }
.sw-ffff00 { background-color: #ffff00; }
.sw-008000 { background-color: #008000; }
.sw-00ff00 { background-color: #00ff00; }
.sw-008080 { background-color: #008080; }
.sw-00ffff { background-color: #00ffff; }
.sw-000080 { background-color: #000080; }
.sw-0000ff { background-color: #0000ff; }
.sw-800080 { background-color: #800080; }
.sw-ff00ff { background-color: #ff00ff; }
.sw-2b0000 { background-color: #2b0000; }
.sw-550000 { background-color: #550000; }
.sw-aa0000 { background-color: #aa0000; }
.sw-d40000 { background-color: #d40000; }
.sw-ff2a2a { background-color: #ff2a2a; }
.sw-ff5555 { background-color: #ff5555; }
.sw-ff8080 { background-color: #ff8080; }
.sw-ffaaaa { background-color: #ffaaaa; }
.sw-ffd5d5 { background-color: #ffd5d5; }
.sw-280b0b { background-color: #280b0b; }
.sw-501616 { background-color: #501616; }
.sw-782121 { background-color: #782121; }
.sw-a02c2c { background-color: #a02c2c; }
.sw-c83737 { background-color: #c83737; }
.sw-d35f5f { background-color: #d35f5f; }
.sw-de8787 { background-color: #de8787; }
.sw-e9afaf { background-color: #e9afaf; }
.sw-f4d7d7 { background-color: #f4d7d7; }
.sw-241c1c { background-color: #241c1c; }
.sw-483737 { background-color: #483737; }
.sw-6c5353 { background-color: #6c5353; }
.sw-916f6f { background-color: #916f6f; }
.sw-ac9393 { background-color: #ac9393; }
.sw-c8b7b7 { background-color: #c8b7b7; }
.sw-e3dbdb { background-color: #e3dbdb; }
.sw-2b1100 { background-color: #2b1100; }
.sw-552200 { background-color: #552200; }
.sw-803300 { background-color: #803300; }
.sw-aa4400 { background-color: #aa4400; }
.sw-d45500 { background-color: #d45500; }
.sw-ff6600 { background-color: #ff6600; }
.sw-ff7f2a { background-color: #ff7f2a; }
.sw-ff9955 { background-color: #ff9955; }
.sw-ffb380 { background-color: #ffb380; }
.sw-ffccaa { background-color: #ffccaa; }
.sw-ffe6d5 { background-color: #ffe6d5; }
.sw-2b1a06 { background-color: #2b1a06; }
.sw-552c12 { background-color: #552c12; }
.palette-arrow {
    margin-left: auto;
    margin-right: 8px;
    align-self: center;
    border-top: 4px solid transparent;
    border-bottom: 4px solid transparent;
    border-right: 5px solid #111;
}

.palette-scroll {
    height: 18px;
    display: flex;
    align-items: center;
    padding-top: 3px;
    background-color: #ececec;
}
.arrow-faint {
    margin-left: 5px;
}
.p-thumb {
    flex: none;
    width: 186px;
    height: 13px;
    margin-left: 8px;
    display: flex;
    align-items: center;
    justify-content: center;
    background: linear-gradient(#f0f0f0, #c0c0c0);
    border: 1px solid #aaa;
    border-radius: 2px;
}
.arrow-dark {
    margin-left: auto;
    margin-right: 20px;
    border-left-color: #111;
}

/* status bar */
.status-bar {
    flex: 1;
    display: flex;
    align-items: center;
    background-color: #ececec;
    min-height: 0;
}
.fill-labels {
    flex: none;
    width: 40px;
    height: 26px;
    padding-left: 2px;
    display: flex;
    flex-direction: column;
    font-size: 10.5px;
    line-height: 13px;
    color: #222;
    align-self: flex-start;
}
.fill-values {
    flex: none;
    width: 83px;
    padding-top: 1px;
    display: flex;
    flex-direction: column;
    align-self: flex-start;
}
.fill-swatch {
    height: 13px;
    margin-bottom: 0;
    background-color: #ff0000;
}
.stroke-none {
    font-style: italic;
    font-size: 10.5px;
    line-height: 12px;
    text-align: center;
    color: #333;
}
.opacity-label {
    flex: none;
    width: 14px;
    margin-left: 4px;
    font-size: 11px;
}
.opacity-input,
.zoom-input {
    flex: none;
    height: 21px;
    line-height: 19px;
    background-color: #fff;
    border: 1px solid #bbb;
    font-size: 11.5px;
}
.opacity-input {
    width: 25px;
    padding-left: 2px;
    text-align: center;
}
.status-bar .spin {
    width: 11px;
    height: 19px;
    margin-left: 1px;
}
.eye {
    flex: none;
    width: 18px;
    height: 18px;
    margin-left: 7px;
}
.padlock {
    flex: none;
    width: 16px;
    height: 18px;
    margin-left: 4px;
}
.layer-combo {
    flex: none;
    width: 82px;
    height: 26px;
    margin-left: 5px;
    display: flex;
    align-items: center;
    justify-content: space-between;
    background-color: #fff;
    border: 1px solid #bbb;
}
.layer-name {
    padding-left: 4px;
    font-weight: bold;
    font-size: 11.5px;
}
.status-text {
    flex: none;
    margin-left: 6px;
    padding-top: 2px;
    font-size: 12px;
    letter-spacing: .53px;
    color: #333;
}
.coords {
    flex: none;
    margin-left: auto;
    width: 72px;
    height: 27px;
    display: flex;
    flex-direction: column;
    justify-content: flex-end;
    padding-left: 1px;
    border-left: 1px solid #ccc;
    font-family: "DejaVu Sans Mono", "Liberation Mono", monospace;
    font-size: 10px;
    line-height: 13px;
    letter-spacing: .1px;
    white-space: nowrap;
    color: #333;
}
.zoom-label {
    flex: none;
    width: 13px;
    font-size: 11px;
}
.zoom-input {
    width: 44px;
    padding-left: 8px;
    font-size: 11.5px;
}
.status-bar .spin-zoom {
    margin-left: 2px;
    width: 8px;
}
.status-bar .spin-zoom i::after {
    left: 0;
    border-left-width: 3px;
    border-right-width: 3px;
}
.grip {
    flex: none;
    width: 10px;
    height: 10px;
    margin: 14px 1px 0 8px;
}
```
